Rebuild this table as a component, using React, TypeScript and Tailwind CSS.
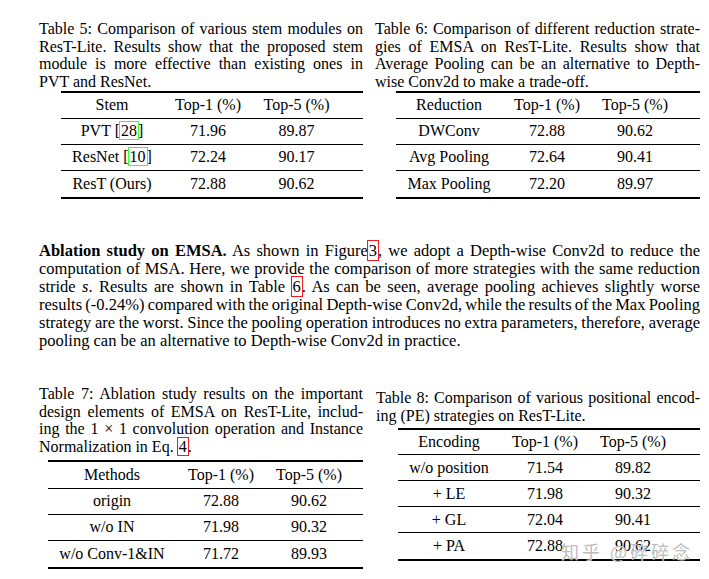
import React from "react";

type Cell = React.ReactNode;

function Ref({ children, color }: { children: React.ReactNode; color: "green" | "red" }) {
  return (
    <span
      className={
        color === "green"
          ? "outline outline-1 outline-[#3cff3c] px-[1px]"
          : "outline outline-1 outline-[#ee1c1c] px-[1px]"
      }
    >
      {children}
    </span>
  );
}

function JLine({ children, last, extra }: { children: React.ReactNode; last?: boolean; extra?: string }) {
  return (
    <div
      className={
        (last ? "text-left whitespace-nowrap" : "text-justify [text-align-last:justify] whitespace-nowrap") +
        (extra ? " " + extra : "")
      }
    >
      {children}
    </div>
  );
}

function DataTable({
  cols,
  header,
  rows,
  headerH,
  className,
}: {
  cols: string[];
  header: string[];
  rows: Cell[][];
  headerH: string;
  className: string;
}) {
  return (
    <div className={className}>
      <div className="border-t-2 border-b-2 border-black">
        <div className={"flex items-center border-b border-black " + headerH}>
          {header.map((h, i) => (
            <div key={i} className={"text-center " + cols[i]}>
              {h}
            </div>
          ))}
        </div>
        {rows.map((r, ri) => (
          <div
            key={ri}
            className={
              "flex items-center h-[26px] " + (ri < rows.length - 1 ? "border-b border-black" : "")
            }
          >
            {r.map((c, ci) => (
              <div key={ci} className={"text-center whitespace-nowrap " + cols[ci]}>
                {c}
              </div>
            ))}
          </div>
        ))}
      </div>
    </div>
  );
}

export default function App() {
  const topHeader = ["Top-1 (%)", "Top-5 (%)"];
  const tight = "[word-spacing:-1px]";
  return (
    <div className="relative w-[709px] h-[579px] overflow-hidden bg-white text-black font-['Liberation_Serif','Times_New_Roman',serif] text-[16px] leading-[17.7px]">
      {/* Top tables */}
      <div className="flex pt-[20px] pl-[39px]">
        <div className="w-[324px]">
          <JLine>Table 5: Comparison of various stem modules on</JLine>
          <JLine>ResT-Lite. Results show that the proposed stem</JLine>
          <JLine>module is more effective than existing ones in</JLine>
          <JLine last>PVT and ResNet.</JLine>
          <DataTable
            className="ml-[22px]"
            cols={["w-[102px]", "w-[90px]", "w-[87px]"]}
            header={["Stem", ...topHeader]}
            headerH="h-[26px]"
            rows={[
              [<>PVT [<Ref color="green">28</Ref>]</>, "71.96", "89.87"],
              [<>ResNet [<Ref color="green">10</Ref>]</>, "72.24", "90.17"],
              ["ResT (Ours)", "72.88", "90.62"],
            ]}
          />
        </div>
        <div className="w-[325px] ml-[12px]">
          <JLine>Table 6: Comparison of different reduction strate-</JLine>
          <JLine>gies of EMSA on ResT-Lite. Results show that</JLine>
          <JLine>Average Pooling can be an alternative to Depth-</JLine>
          <JLine last>wise Conv2d to make a trade-off.</JLine>
          <DataTable
            className="ml-[21px]"
            cols={["w-[106px]", "w-[90px]", "w-[86px]"]}
            header={["Reduction", ...topHeader]}
            headerH="h-[26px]"
            rows={[
              ["DWConv", "72.88", "90.62"],
              ["Avg Pooling", "72.64", "90.41"],
              ["Max Pooling", "72.20", "89.97"],
            ]}
          />
        </div>
      </div>

      {/* Paragraph */}
      <div className="mt-[43px] ml-[39px] w-[661px] text-[16.5px] leading-[18px]">
        <JLine extra={tight}>
          <b>Ablation study on EMSA.</b> As shown in Figure<Ref color="red">3</Ref>, we adopt a Depth-wise Conv2d to reduce the
        </JLine>
        <JLine extra={tight}>computation of MSA. Here, we provide the comparison of more strategies with the same reduction</JLine>
        <JLine extra={tight}>
          stride <i>s</i>. Results are shown in Table <Ref color="red">6</Ref>. As can be seen, average pooling achieves slightly worse
        </JLine>
        <JLine extra={tight}>results (-0.24%) compared with the original Depth-wise Conv2d, while the results of the Max Pooling</JLine>
        <JLine extra={tight}>strategy are the worst. Since the pooling operation introduces no extra parameters, therefore, average</JLine>
        <JLine last>pooling can be an alternative to Depth-wise Conv2d in practice.</JLine>
      </div>

      {/* Bottom tables */}
      <div className="flex items-start pl-[39px] mt-[35px]">
        <div className="w-[324px]">
          <JLine>Table 7: Ablation study results on the important</JLine>
          <JLine>design elements of EMSA on ResT-Lite, includ-</JLine>
          <JLine>ing the 1 × 1 convolution operation and Instance</JLine>
          <JLine last>
            Normalization in Eq. <Ref color="red">4</Ref>.
          </JLine>
          <DataTable
            className="ml-[9px] mt-[4px]"
            cols={["w-[128px]", "w-[90px]", "w-[86px]"]}
            header={["Methods", ...topHeader]}
            headerH="h-[27px]"
            rows={[
              ["origin", "72.88", "90.62"],
              ["w/o IN", "71.98", "90.32"],
              ["w/o Conv-1&IN", "71.72", "89.93"],
            ]}
          />
        </div>
        <div className="w-[324px] ml-[13px] pt-[4px]">
          <JLine>Table 8: Comparison of various positional encod-</JLine>
          <JLine last>ing (PE) strategies on ResT-Lite.</JLine>
          <DataTable
            className="ml-[22px] mt-[4px]"
            cols={["w-[102px]", "w-[90px]", "w-[86px]"]}
            header={["Encoding", ...topHeader]}
            headerH="h-[25px]"
            rows={[
              ["w/o position", "71.54", "89.82"],
              ["+ LE", "71.98", "90.32"],
              ["+ GL", "72.04", "90.41"],
              ["+ PA", "72.88", "90.62"],
            ]}
          />
        </div>
      </div>

      {/* Watermark */}
      <div className="absolute left-[561px] top-[542px] text-[18px] leading-none tracking-[3px] whitespace-nowrap text-[#b4b4b4]/90 font-['Noto_Sans_CJK_SC',sans-serif] [text-shadow:0_0_1px_#ffffff]">
        知乎 @碎碎念
      </div>
    </div>
  );
}
